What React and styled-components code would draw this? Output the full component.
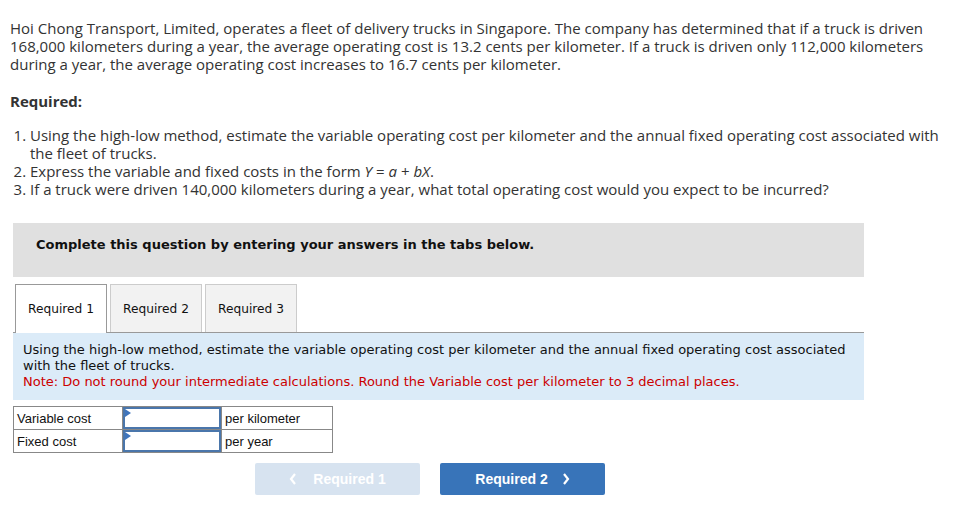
import styled, { createGlobalStyle } from "styled-components"

const Global = createGlobalStyle`
  body {
    margin: 0;
    background: #fff;
    color: #333;
  }
`

const Page = styled.div`
  padding: 19px 10px 12px 10px;
  width: 954px;
  box-sizing: border-box;
  font-family: "Open Sans", "Liberation Sans", sans-serif;
`
const Intro = styled.p`
  margin: 0;
  font-size: 15px;
  line-height: 18px;
  color: #333;
  white-space: nowrap;
`
const ReqHead = styled.h4`
  margin: 19px 0 16px 0;
  font-size: 15px;
  line-height: 18px;
  font-weight: 700;
`
const List = styled.ol`
  margin: 0;
  padding-left: 20px;
  font-size: 15px;
  line-height: 18px;
  white-space: nowrap;
`
const Instruction = styled.div`
  margin: 25px 0 0 3px;
  width: 851px;
  height: 54px;
  background: #e0e0e0;
  padding: 14px 0 0 23px;
  box-sizing: border-box;
  font-family: "DejaVu Sans", Verdana, sans-serif;
  font-weight: 700;
  font-size: 13px;
  line-height: 16px;
  color: #111;
`
const Tabs = styled.div`
  margin: 7px 0 0 3px;
  width: 851px;
  display: flex;
  gap: 3px;
  padding-left: 2px;
  box-sizing: border-box;
  border-bottom: 1px solid #999;
`
const Tab = styled.div`
  width: 92px;
  box-sizing: border-box;
  display: flex;
  align-items: center;
  justify-content: center;
  border: 1px solid ${(p) => (p.active ? "#999" : "#ccc")};
  border-bottom: none;
  background: ${(p) => (p.active ? "#fff" : "#f2f2f2")};
  margin-bottom: ${(p) => (p.active ? "-1px" : "0")};
  height: ${(p) => (p.active ? "49px" : "48px")};
  font-family: "DejaVu Sans", Verdana, sans-serif;
  font-size: 12.2px;
  color: #111;
`
const Panel = styled.div`
  margin-left: 3px;
  width: 851px;
  height: 67px;
  box-sizing: border-box;
  background: #dbebf8;
  padding: 9px 10px 0 10px;
  font-family: "DejaVu Sans", Verdana, sans-serif;
  font-size: 13px;
  line-height: 16px;
  color: #111;
  white-space: nowrap;
`
const Note = styled.div`
  color: #c00;
`
const Table = styled.table`
  margin: 6px 0 0 3px;
  border-collapse: collapse;
  table-layout: fixed;
  width: 320px;
  font-family: "Liberation Sans", Arial, sans-serif;
  font-size: 13px;
  color: #111;
  td {
    border: 1px solid #888;
    height: 22px;
    padding: 0 3px;
    box-sizing: border-box;
  }
`
const InputCell = styled.td`
  && {
    padding: 0;
  }
`
const Field = styled.div`
  position: relative;
  height: 22px;
  border: 2px solid #4a76ab;
  box-sizing: border-box;
  &::before {
    content: "";
    position: absolute;
    left: 0;
    top: 0;
    border-top: 4px solid transparent;
    border-bottom: 4px solid transparent;
    border-left: 6px solid #3f75bd;
  }
`
const Nav = styled.div`
  margin: 10px 0 0 245px;
  display: flex;
  gap: 20px;
`
const NavButton = styled.button`
  width: 165px;
  height: 32px;
  border: none;
  border-radius: 2px;
  background: ${(p) => (p.disabled ? "#d7e3f0" : "#3874b9")};
  color: #fff;
  font-family: "Liberation Sans", Arial, sans-serif;
  font-weight: 700;
  font-size: 14px;
  display: flex;
  align-items: center;
  justify-content: center;
  gap: ${(p) => (p.disabled ? "16px" : "14px")};
  cursor: pointer;
`

const Chevron = ({ left }) => (
  <svg width="8" height="12" viewBox="0 0 8 12">
    <path
      d={left ? "M6 1 L2 6 L6 11" : "M2 1 L6 6 L2 11"}
      fill="none"
      stroke="#fff"
      strokeWidth="2.2"
    />
  </svg>
)

const App = () => {
  return (
    <Page>
      <Global />
      <Intro>
        Hoi Chong Transport, Limited, operates a fleet of delivery trucks in Singapore. The company has determined that if a truck is driven
        <br />
        168,000 kilometers during a year, the average operating cost is 13.2 cents per kilometer. If a truck is driven only 112,000 kilometers
        <br />
        during a year, the average operating cost increases to 16.7 cents per kilometer.
      </Intro>
      <ReqHead>Required:</ReqHead>
      <List>
        <li>
          Using the high-low method, estimate the variable operating cost per kilometer and the annual fixed operating cost associated with
          <br />
          the fleet of trucks.
        </li>
        <li>
          Express the variable and fixed costs in the form <i>Y</i> = <i>a</i> + <i>bX</i>.
        </li>
        <li>If a truck were driven 140,000 kilometers during a year, what total operating cost would you expect to be incurred?</li>
      </List>
      <Instruction>Complete this question by entering your answers in the tabs below.</Instruction>
      <Tabs>
        <Tab active>Required 1</Tab>
        <Tab>Required 2</Tab>
        <Tab>Required 3</Tab>
      </Tabs>
      <Panel>
        Using the high-low method, estimate the variable operating cost per kilometer and the annual fixed operating cost associated
        <br />
        with the fleet of trucks.
        <Note>Note: Do not round your intermediate calculations. Round the Variable cost per kilometer to 3 decimal places.</Note>
      </Panel>
      <Table>
        <colgroup>
          <col style={{ width: 109 }} />
          <col style={{ width: 99 }} />
          <col style={{ width: 111 }} />
        </colgroup>
        <tbody>
          <tr>
            <td>Variable cost</td>
            <InputCell>
              <Field />
            </InputCell>
            <td>per kilometer</td>
          </tr>
          <tr>
            <td>Fixed cost</td>
            <InputCell>
              <Field />
            </InputCell>
            <td>per year</td>
          </tr>
        </tbody>
      </Table>
      <Nav>
        <NavButton disabled>
          <Chevron left />
          Required 1
        </NavButton>
        <NavButton>
          Required 2
          <Chevron />
        </NavButton>
      </Nav>
    </Page>
  )
}

export default App
